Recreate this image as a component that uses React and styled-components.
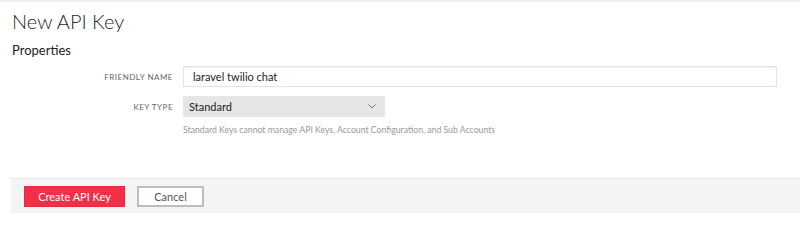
import styled, { createGlobalStyle } from "styled-components";

const GlobalStyle = createGlobalStyle`
  body {
    margin: 0;
    background: #fff;
    font-family: Lato, "Open Sans", "Liberation Sans", sans-serif;
    color: #333;
  }
`;

const Page = styled.div`
  width: 800px;
  height: 220px;
  border-top: 2px solid #f0f0f0;
  box-sizing: border-box;
  display: flex;
  flex-direction: column;
`;

const Title = styled.h1`
  margin: 7px 0 0 12px;
  font-size: 20px;
  font-weight: 300;
  line-height: 24px;
  color: #1f1f1f;
`;

const Section = styled.h2`
  margin: 9px 0 0 12px;
  font-size: 13px;
  font-weight: 400;
  line-height: 16px;
  color: #222;
`;

const Form = styled.div`
  margin-top: 8px;
  display: grid;
  grid-template-columns: 173px 594px;
  column-gap: 10px;
  row-gap: 9px;
  align-items: center;
`;

const Label = styled.label`
  text-align: right;
  font-size: 8px;
  letter-spacing: 0.5px;
  text-transform: uppercase;
  color: #666;
`;

const Input = styled.div`
  height: 21px;
  box-sizing: border-box;
  border: 1px solid #e4e4e4;
  box-shadow: inset 0 1px 1px #f0f0f0;
  display: flex;
  align-items: center;
  padding-left: 9px;
  font-size: 11px;
  color: #222;
`;

const Select = styled.div`
  width: 202px;
  height: 21px;
  box-sizing: border-box;
  background: #e6e6e6;
  display: flex;
  align-items: center;
  justify-content: space-between;
  padding: 0 9px 0 6px;
  font-size: 11px;
  color: #222;
`;

const Help = styled.div`
  grid-column: 2;
  margin-top: -2px;
  font-size: 8.7px;
  color: #999;
`;

const Footer = styled.div`
  margin: auto 0 7px 11px;
  height: 35px;
  box-sizing: border-box;
  background: #f4f4f4;
  border-top: 1px solid #e6e6e6;
  display: flex;
  align-items: center;
  gap: 12px;
  padding: 0 0 0 13px;
`;

const Button = styled.button`
  height: 21px;
  box-sizing: border-box;
  padding: 0;
  width: ${(p) => (p.primary ? "101px" : "67px")};
  background: ${(p) => (p.primary ? "#f22f46" : "#fff")};
  color: ${(p) => (p.primary ? "#fff" : "#555")};
  border: ${(p) => (p.primary ? "1px solid #e52a40" : "2px solid #bdbdbd")};
  font-family: inherit;
  font-size: 11px;
`;

const Chevron = () => (
  <svg width="8" height="5" viewBox="0 0 8 5" fill="none" stroke="#666" strokeWidth="0.9">
    <path d="M0.5 0.5 L4 4 L7.5 0.5" />
  </svg>
);

export default function App() {
  return (
    <Page>
      <GlobalStyle />
      <Title>New API Key</Title>
      <Section>Properties</Section>
      <Form>
        <Label>Friendly Name</Label>
        <Input>laravel twilio chat</Input>
        <Label>Key Type</Label>
        <Select>
          Standard
          <Chevron />
        </Select>
        <Help>Standard Keys cannot manage API Keys, Account Configuration, and Sub Accounts</Help>
      </Form>
      <Footer>
        <Button primary>Create API Key</Button>
        <Button>Cancel</Button>
      </Footer>
    </Page>
  );
}
